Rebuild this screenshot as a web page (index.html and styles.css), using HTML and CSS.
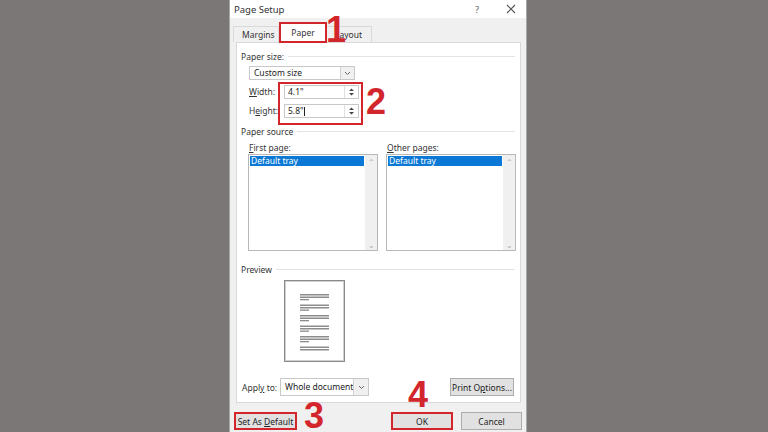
FILE: index.html
```html
<!DOCTYPE html>
<html lang="en">
  <head>
    <meta charset="UTF-8" />
    <meta name="viewport" content="width=device-width, initial-scale=1.0" />
    <title>Page Setup</title>
    <link rel="stylesheet" href="styles.css">
  </head>
  <body>
    <div class="dialog">
      <div class="titlebar">
        <span class="title">Page Setup</span>
        <span class="help">?</span>
        <svg class="close" width="10" height="10" viewBox="0 0 10 10">
          <path d="M1 1 L9 9 M9 1 L1 9" stroke="#555" stroke-width="1.1" fill="none" />
        </svg>
      </div>

      <div class="tabs">
        <div class="tab">Margins</div>
        <div class="tab active">Paper</div>
        <div class="tab">Layout</div>
      </div>

      <div class="panel">
        <div class="group">Paper size:</div>
        <div class="combo combo-size">
          <span class="combo-text">Custom size</span>
          <span class="drop">
            <svg width="7" height="5" viewBox="0 0 7 5"><path d="M1 1 L3.5 3.5 L6 1" stroke="#666" fill="none" /></svg>
          </span>
        </div>

        <div class="dims">
          <div class="dim-labels">
            <label><u>W</u>idth:</label>
            <label>H<u>e</u>ight:</label>
          </div>
          <div class="dim-inputs">
            <div class="spin">
              <span class="spin-text">4.1"</span>
              <span class="spin-btns">
                <svg width="7" height="10" viewBox="0 0 7 10"><path d="M1 4 L3.5 1.5 L6 4 Z M1 6 L3.5 8.5 L6 6 Z" fill="#444" /></svg>
              </span>
            </div>
            <div class="spin">
              <span class="spin-text">5.8"<span class="caret"></span></span>
              <span class="spin-btns">
                <svg width="7" height="10" viewBox="0 0 7 10"><path d="M1 4 L3.5 1.5 L6 4 Z M1 6 L3.5 8.5 L6 6 Z" fill="#444" /></svg>
              </span>
            </div>
          </div>
        </div>

        <div class="group">Paper source</div>
        <div class="sources">
          <div class="source">
            <label><u>F</u>irst page:</label>
            <div class="listbox">
              <div class="items"><div class="item selected">Default tray</div></div>
              <div class="scroll"><span>&#8963;</span><span>&#8964;</span></div>
            </div>
          </div>
          <div class="source">
            <label><u>O</u>ther pages:</label>
            <div class="listbox">
              <div class="items"><div class="item selected">Default tray</div></div>
              <div class="scroll"><span>&#8963;</span><span>&#8964;</span></div>
            </div>
          </div>
        </div>

        <div class="group group-preview">Preview</div>
        <div class="thumb">
          <svg width="61" height="82" viewBox="0 0 61 82">
            <rect x="0.5" y="0.5" width="60" height="81" fill="#fff" stroke="#8a8a8a" />
            <rect x="1.5" y="1.5" width="58" height="79" fill="none" stroke="#d0d0d0" />
            <g fill="#8c8c8c">
              <rect x="16" y="14" width="29" height="1.5" /><rect x="16" y="16.5" width="29" height="1.5" /><rect x="16" y="19" width="9" height="1.3" />
              <rect x="16" y="24.5" width="29" height="1.5" /><rect x="16" y="27" width="29" height="1.5" /><rect x="16" y="29.5" width="9" height="1.3" />
              <rect x="16" y="35" width="29" height="1.5" /><rect x="16" y="37.5" width="29" height="1.5" /><rect x="16" y="40" width="9" height="1.3" />
              <rect x="16" y="45.5" width="29" height="1.5" /><rect x="16" y="48" width="29" height="1.5" /><rect x="16" y="50.5" width="9" height="1.3" />
              <rect x="16" y="56" width="29" height="1.5" /><rect x="16" y="58.5" width="29" height="1.5" /><rect x="16" y="61" width="9" height="1.3" />
              <rect x="16" y="66.5" width="29" height="1.5" /><rect x="16" y="69" width="29" height="1.5" />
            </g>
          </svg>
        </div>

        <div class="apply">
          <label>Appl<u>y</u> to:</label>
          <div class="combo combo-apply">
            <span class="combo-text">Whole document</span>
            <span class="drop">
              <svg width="7" height="5" viewBox="0 0 7 5"><path d="M1 1 L3.5 3.5 L6 1" stroke="#666" fill="none" /></svg>
            </span>
          </div>
          <button class="btn btn-print">Print O<u>p</u>tions...</button>
        </div>
      </div>

      <div class="footer">
        <button class="btn btn-default marked">Set As <u>D</u>efault</button>
        <button class="btn btn-ok marked">OK</button>
        <button class="btn btn-cancel">Cancel</button>
      </div>

      <span class="mark mark-1">1</span>
      <span class="mark mark-2">2</span>
      <span class="mark mark-3">3</span>
      <span class="mark mark-4">4</span>
    </div>
  </body>
</html>
```

FILE: styles.css
```css
body {
  margin: 0;
  background-color: #7a7776;
  font-family: "Noto Sans", "Open Sans", sans-serif;
  font-size: 8.5px;
  color: #222;
  height: 432px;
  overflow: hidden;
  white-space: nowrap;
}
.dialog {
  position: relative;
  width: 298px;
  height: 432px;
  margin-left: 229px;
  background-color: #f0f0f0;
  border-left: 1px solid #a9a9a9;
  border-right: 1px solid #a9a9a9;
  box-sizing: border-box;
}
.titlebar {
  height: 18px;
  background-color: #fff;
  display: flex;
  align-items: center;
  padding: 0 10px 0 4px;
}
.title {
  flex: 1;
  font-size: 9.5px;
  color: #333;
}
.help {
  margin-right: 27px;
  color: #555;
}
.tabs {
  height: 24px;
  display: flex;
  align-items: flex-end;
  padding-left: 3px;
}
.tab {
  height: 15px;
  line-height: 15px;
  padding: 0 8px;
  border: 1px solid #d9d9d9;
  border-bottom: none;
  background-color: #f0f0f0;
  color: #333;
}
.tab + .tab {
  border-left: none;
}
.tab:first-child {
  width: 28px;
  text-align: center;
}
.tab.active {
  position: relative;
  z-index: 1;
  height: 17px;
  line-height: 17px;
  width: 28px;
  text-align: center;
  background-color: #fff;
  border: 2px solid #d3262c;
  margin-bottom: -1px;
}
.tab.active + .tab {
  width: 28px;
}
.panel {
  margin: 0 5px 0 6px;
  height: 361px;
  background-color: #fff;
  border: 1px solid #d9d9d9;
  box-sizing: border-box;
  padding: 7px 5px 0 4px;
}
.group {
  display: flex;
  align-items: center;
  height: 12px;
  color: #333;
}
.group::after {
  content: "";
  flex: 1;
  margin-left: 4px;
  border-top: 1px solid #e3e3e3;
}
.combo {
  display: flex;
  height: 14px;
  border: 1px solid #c8c8c8;
  box-sizing: border-box;
  background-color: #fff;
}
.combo-text {
  flex: 1;
  padding-left: 4px;
  line-height: 12px;
  color: #222;
  overflow: hidden;
}
.drop {
  width: 13px;
  border-left: 1px solid #d0d0d0;
  background-color: #f0f0f0;
  display: flex;
  align-items: center;
  justify-content: center;
}
.combo-size {
  width: 106px;
  margin: 4px 0 0 8px;
}
.dims {
  display: flex;
  margin: 2px 0 0 8px;
}
.dim-labels {
  width: 29px;
  display: flex;
  flex-direction: column;
  padding-top: 3px;
}
.dim-labels label {
  height: 19px;
  line-height: 14px;
  color: #333;
}
.dim-inputs {
  border: 2px solid #d3262c;
  padding: 1px 2px 5px 4px;
  display: flex;
  flex-direction: column;
  gap: 5px;
}
.spin {
  width: 75px;
  height: 14px;
  display: flex;
  border: 1px solid #c8c8c8;
  box-sizing: border-box;
}
.spin-text {
  flex: 1;
  padding-left: 3px;
  line-height: 12px;
  display: flex;
  align-items: center;
}
.caret {
  width: 1px;
  height: 9px;
  background-color: #222;
  margin-left: 1px;
}
.spin-btns {
  width: 13px;
  border-left: 1px solid #e0e0e0;
  display: flex;
  align-items: center;
  justify-content: center;
}
.sources {
  display: flex;
  gap: 8px;
  margin: 5px 0 0 7px;
}
.source label {
  display: block;
  height: 12px;
  line-height: 12px;
  padding-left: 1px;
  color: #333;
}
.listbox {
  width: 130px;
  height: 97px;
  border: 1px solid #b8b8b8;
  box-sizing: border-box;
  display: flex;
}
.items {
  flex: 1;
  padding: 1px;
}
.item {
  height: 10px;
  line-height: 10px;
  padding-left: 1px;
}
.item.selected {
  background-color: #0a78d4;
  color: #fff;
}
.scroll {
  width: 12px;
  background-color: #f0f0f0;
  display: flex;
  flex-direction: column;
  justify-content: space-between;
  align-items: center;
  color: #aaa;
  font-size: 8px;
  line-height: 10px;
  padding: 2px 0 0;
}
.group-preview {
  margin-top: 12px;
}
.thumb {
  margin: 5px 0 0 43px;
  height: 82px;
}
.thumb svg {
  display: block;
}
.apply {
  display: flex;
  align-items: center;
  margin: 16px 1px 0 1px;
  height: 18px;
}
.apply label {
  width: 38px;
  color: #333;
}
.combo-apply {
  width: 89px;
  height: 18px;
}
.combo-apply .combo-text {
  line-height: 16px;
}
.combo-apply .drop {
  width: 14px;
}
.btn {
  font-family: inherit;
  font-size: 8.5px;
  color: #222;
  height: 18px;
  background-color: #e1e1e1;
  border: 1px solid #adadad;
  padding: 0;
  box-sizing: border-box;
  white-space: nowrap;
}
.btn-print {
  width: 64px;
  margin-left: auto;
}
.footer {
  display: flex;
  align-items: center;
  padding: 9px 4px 0 4px;
}
.footer .btn {
  height: 18px;
}
.btn.marked {
  border: 2px solid #d3262c;
}
.btn-default {
  width: 63px;
}
.btn-ok {
  width: 62px;
  margin-left: auto;
}
.btn-cancel {
  width: 61px;
  margin-left: 8px;
}
.mark {
  position: absolute;
  font-family: "Liberation Sans", Arial, sans-serif;
  font-weight: bold;
  font-size: 36px;
  line-height: 28px;
  color: #d3262c;
}
.mark-1 {
  left: 96px;
  top: 16px;
}
.mark-2 {
  left: 136px;
  top: 88px;
}
.mark-3 {
  left: 74px;
  top: 402px;
}
.mark-4 {
  left: 178px;
  top: 381px;
}
```
